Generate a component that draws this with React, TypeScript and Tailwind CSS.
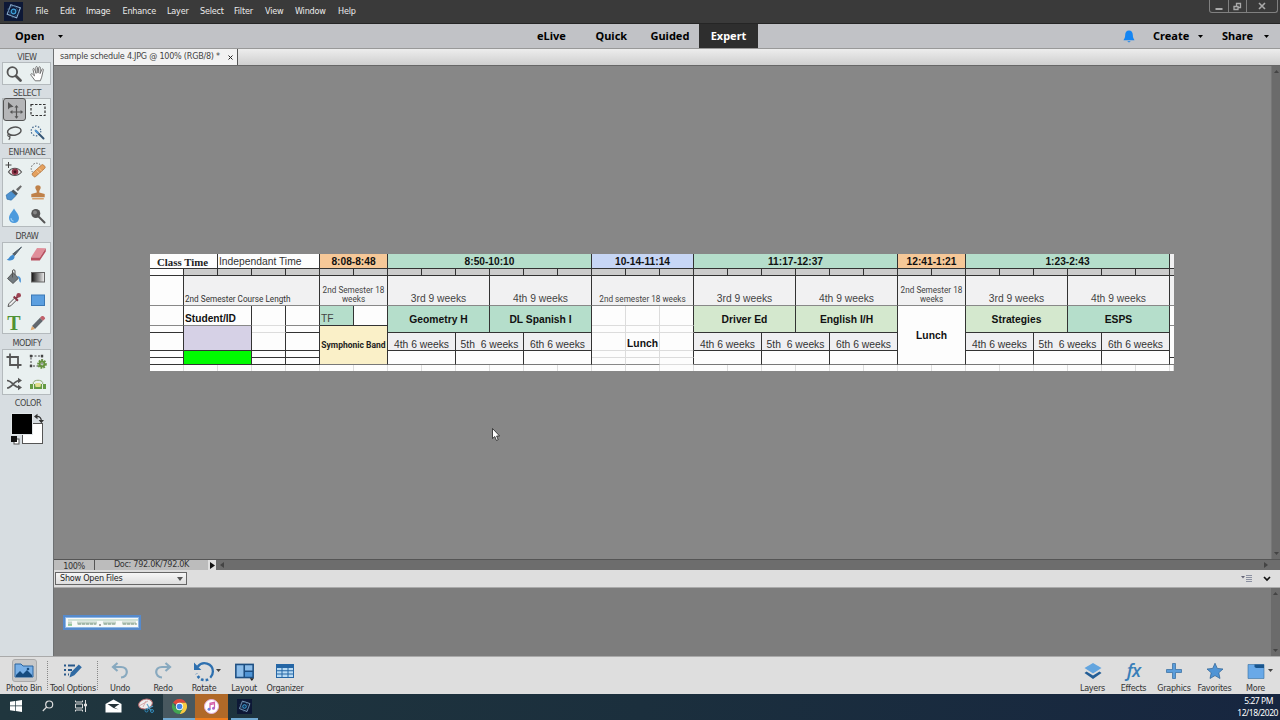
import type { ReactNode } from 'react';

const menuItems = [
  { label: 'File', width: 'w-[24.5px]' },
  { label: 'Edit', width: 'w-[26px]' },
  { label: 'Image', width: 'w-[36.5px]' },
  { label: 'Enhance', width: 'w-[44.5px]' },
  { label: 'Layer', width: 'w-[33px]' },
  { label: 'Select', width: 'w-[34px]' },
  { label: 'Filter', width: 'w-[31px]' },
  { label: 'View', width: 'w-[30px]' },
  { label: 'Window', width: 'w-[43px]' },
  { label: 'Help', width: 'w-[30px]' },
];

function Svg({ size = 18, children }: { size?: number; children: ReactNode }) {
  return (
    <svg width={size} height={size} viewBox="0 0 18 18" fill="none" className="shrink-0">
      {children}
    </svg>
  );
}

function Caret({ className = '' }: { className?: string }) {
  return (
    <svg width="5" height="3" viewBox="0 0 5 3" className={`shrink-0 ${className}`}>
      <path d="M0 0h5L2.5 3z" fill="currentColor" />
    </svg>
  );
}

function ElementsLogo({ size }: { size: number }) {
  return (
    <Svg size={size}>
      <rect width="18" height="18" fill="#0d1836" />
      <path d="m6.5 2.5 9 3-3.5 9.5-9-3.5z" stroke="#8fb2d2" strokeWidth="1" />
      <path d="M3.5 6.5 10 3l4.5 7.5L8 15z" stroke="#3d6286" strokeWidth=".6" />
      <circle cx="9" cy="9" r="2.2" fill="#12395d" stroke="#3fa0d8" strokeWidth="1.2" />
    </Svg>
  );
}

const toolGroups: { name: string; label: string; tools: { name: string; icon: ReactNode }[] }[] = [
  {
    name: 'VIEW',
    label: 'h-[13px]',
    tools: [
      {
        name: 'Zoom',
        icon: (
          <Svg>
            <circle cx="7.3" cy="7" r="4.8" stroke="#555" strokeWidth="1.8" />
            <path d="m11 11 4.5 4.5" stroke="#555" strokeWidth="2.8" strokeLinecap="round" />
          </Svg>
        ),
      },
      {
        name: 'Hand',
        icon: (
          <Svg>
            <path
              d="M6.2 15.8 2 10.2c-.8-1.2.6-2 1.5-1.1l2 1.8L4 4.6c-.3-1.3 1.1-1.6 1.5-.4l1.6 4.2-.3-5.9c0-1.3 1.5-1.3 1.6 0l.6 5.6.8-5.6c.2-1.2 1.6-1 1.5.2l-.2 5.9 1.8-4.2c.5-1.1 1.7-.6 1.4.5l-1.6 7.3-1.4 3.6z"
              fill="#fff"
              stroke="#666"
              strokeWidth=".9"
            />
          </Svg>
        ),
      },
    ],
  },
  {
    name: 'SELECT',
    label: 'h-[13px]',
    tools: [
      {
        name: 'Move',
        icon: (
          <Svg>
            <path d="M2 1v7.5l2-2 3.6-.8z" fill="#555" />
            <path d="M10.5 5.5v11M5 11h11" stroke="#555" strokeWidth="1.2" />
            <path d="m10.5 4 2 2.6h-4zM10.5 17.8l2-2.6h-4zM3.8 11l2.6-2v4zM17.2 11l-2.6-2v4z" fill="#555" />
          </Svg>
        ),
      },
      {
        name: 'Marquee',
        icon: (
          <Svg>
            <rect x="2" y="3.5" width="14" height="11" stroke="#333" strokeWidth="1.2" strokeDasharray="2.5 1.5" />
          </Svg>
        ),
      },
      {
        name: 'Lasso',
        icon: (
          <Svg>
            <ellipse cx="9.3" cy="7.2" rx="6.8" ry="4" transform="rotate(-10 9.3 7.2)" stroke="#555" strokeWidth="1.5" />
            <path d="M4.4 10c-1.6-.2-2.2 1.8-.8 2.3 1.5.4 2.5-1.5 1-2.2M4.5 12.4c.8 1 .5 2.2-.8 3.3" stroke="#555" strokeWidth="1.2" />
          </Svg>
        ),
      },
      {
        name: 'Quick Selection',
        icon: (
          <Svg>
            <circle cx="7" cy="7" r="4.8" stroke="#496c91" strokeWidth="1.2" strokeDasharray="1.5 1.5" />
            <path d="m7 7 7.5 7.5" stroke="#355575" strokeWidth="2" strokeLinecap="round" />
            <path d="m6.5 6.5 2.5 2.5" stroke="#5599d6" strokeWidth="1.8" strokeLinecap="round" />
          </Svg>
        ),
      },
    ],
  },
  {
    name: 'ENHANCE',
    label: 'h-[14px]',
    tools: [
      {
        name: 'Red Eye',
        icon: (
          <Svg>
            <path d="M3.5 1v6M.5 4h6" stroke="#444" />
            <path d="M3.5 11c3-5 9.5-5 13 0-3.5 4.5-10 4.5-13 0z" fill="#ece8e8" stroke="#555" strokeWidth="1.2" />
            <circle cx="10" cy="10.8" r="3.3" fill="#8d3448" />
            <circle cx="10" cy="10.8" r="1.4" fill="#40111c" />
          </Svg>
        ),
      },
      {
        name: 'Spot Healing',
        icon: (
          <Svg>
            <circle cx="7.5" cy="7.5" r="5.3" stroke="#666" strokeDasharray="1.5 1.5" />
            <rect x="2" y="7.5" width="15" height="4.6" rx="1.5" transform="rotate(-42 9.5 9.6)" fill="#e4a15f" stroke="#ab6d35" strokeWidth=".7" />
            <path d="m7.5 9.5 3 3.2M10 7.3l3 3.2" stroke="#f5d1a6" strokeWidth=".8" />
          </Svg>
        ),
      },
      {
        name: 'Smart Brush',
        icon: (
          <Svg>
            <path d="m11 5.2 4.5-4 1.4 1.4-4 4.6z" fill="#6b6b6b" />
            <path d="m8.3 5.4 4.6 4.2-2 2.2-4.8-4.2z" fill="#4d5962" />
            <path d="m6 7.5 4.8 4.2-4.5 4.5L2 15.2 1.2 11z" fill="#4c91cf" stroke="#2869a5" strokeWidth=".6" />
          </Svg>
        ),
      },
      {
        name: 'Clone Stamp',
        icon: (
          <Svg>
            <path d="M7.8 8.5C8 6 6.2 5.7 6.3 3.6c.1-3.2 5.3-3.2 5.4 0 .1 2.1-1.7 2.4-1.5 4.9l5.5 1.5v3.2H2.3V10z" fill="#bf8149" />
            <path d="M3.2 14h11.6v1.5H3.2z" fill="#d6a26e" />
          </Svg>
        ),
      },
      {
        name: 'Blur',
        icon: (
          <Svg>
            <path d="M9 1.5c2.5 4 5 6.4 5 9.6a5 5 0 0 1-10 0c0-3.2 2.5-5.6 5-9.6z" fill="#4b9add" />
            <path d="M6 11c0 2 1.3 3 2.6 3.3" stroke="#95ccf4" strokeWidth="1.1" />
          </Svg>
        ),
      },
      {
        name: 'Sponge',
        icon: (
          <Svg>
            <circle cx="6.8" cy="6.5" r="4.5" fill="#555" />
            <circle cx="6" cy="5.6" r="2" fill="#858585" />
            <path d="m10 10 5.5 5.5" stroke="#555" strokeWidth="2" strokeLinecap="round" />
          </Svg>
        ),
      },
    ],
  },
  {
    name: 'DRAW',
    label: 'h-[15px] pt-[3px]',
    tools: [
      {
        name: 'Brush',
        icon: (
          <Svg>
            <path d="m16.5 2-7 8.6-1.8-1.5z" fill="#53606b" stroke="#53606b" />
            <path d="M8.2 9.8c2.2 1.3 1.5 4.3-.9 5.2-2 .8-4.4.4-5.6-.6 2.7-.2 2.5-3.8 6.5-4.6z" fill="#3f8bd0" />
          </Svg>
        ),
      },
      {
        name: 'Eraser',
        icon: (
          <Svg>
            <path d="m8 3 8.8.2-6 9.2H2z" fill="#e08e9a" />
            <path d="m2 12.4 8.8.2v3H2zM10.8 12.4l6-9.2v3.2l-6 9.2z" fill="#b95060" />
          </Svg>
        ),
      },
      {
        name: 'Paint Bucket',
        icon: (
          <Svg>
            <path d="m8 4.5 5.5 5.7-5.5 5.3-5.5-5z" fill="#737b80" stroke="#444" strokeWidth=".8" />
            <path d="M7.5 9.5V3c0-1.7 2.5-1.7 2.5 0v4" stroke="#555" />
            <path d="M12 8c3.8.3 4.3 2.5 3.8 6.8-1.7-.8-1.8-3.2-2-4.5z" fill="#4f96d7" />
          </Svg>
        ),
      },
      {
        name: 'Gradient',
        icon: (
          <Svg>
            <defs>
              <linearGradient id="toolGradient">
                <stop stopColor="#111" />
                <stop offset="1" stopColor="#f2f2f2" />
              </linearGradient>
            </defs>
            <rect x="2.5" y="4.5" width="13" height="9.5" fill="url(#toolGradient)" stroke="#666" />
          </Svg>
        ),
      },
      {
        name: 'Eyedropper',
        icon: (
          <Svg>
            <path d="m3 15.5.8-2.7 6-6 2 2-6 6z" fill="#eee" stroke="#555" />
            <path d="m8.7 5.5 4.2 4.2M10.7 7.5l2.8-2.8" stroke="#873847" strokeWidth="2" />
            <circle cx="13.7" cy="4.3" r="2.3" fill="#9d4453" />
          </Svg>
        ),
      },
      {
        name: 'Shape',
        icon: (
          <Svg>
            <rect x="2.5" y="4" width="13" height="10.5" fill="#5b9fe0" stroke="#3b78b5" />
          </Svg>
        ),
      },
      { name: 'Type', icon: <span className="font-['Liberation_Serif',serif] text-[20px] leading-none font-bold text-[#509235]">T</span> },
      {
        name: 'Pencil',
        icon: (
          <Svg>
            <path d="m3 12 8-8.2 3 3L6 15z" fill="#62686e" />
            <path d="m3 12 3 3-4.3 1.3z" fill="#dfa468" />
            <path d="m11 3.8 1.8-1.7c1.3-1 4.2 1.7 3 3L14 6.8z" fill="#c1616b" />
          </Svg>
        ),
      },
    ],
  },
  {
    name: 'MODIFY',
    label: 'h-[15px] pt-[2px]',
    tools: [
      {
        name: 'Crop',
        icon: (
          <Svg>
            <path d="M5 1.5V13h11.5M1.5 5H13v11.5" stroke="#555" strokeWidth="1.8" />
          </Svg>
        ),
      },
      {
        name: 'Recompose',
        icon: (
          <Svg>
            <path d="M2 4h11v10H2z" stroke="#444" strokeDasharray="2 1.5" />
            <path d="M.8 2.8h2.4v2.4H.8zM11.8 2.8h2.4v2.4h-2.4zM.8 12.8h2.4v2.4H.8z" fill="#444" />
            <circle cx="13" cy="12" r="3.8" stroke="#65923f" strokeWidth="2" strokeDasharray="1.7 1.1" />
            <circle cx="13" cy="12" r="2.4" stroke="#65923f" strokeWidth="2" />
          </Svg>
        ),
      },
      {
        name: 'Content-Aware Move',
        icon: (
          <Svg>
            <path d="M2 5.5c5 0 7 7 12.5 7M2 13c5 0 7-7.5 12.5-7.5" stroke="#555" strokeWidth="1.7" />
            <path d="m13 2.8 4 2.7-4 2.7zM13 9.8l4 2.7-4 2.7z" fill="#555" />
          </Svg>
        ),
      },
      {
        name: 'Straighten',
        icon: (
          <Svg>
            <path d="M4.3 9V7.5c1-3 8.4-3 9.4 0V9" stroke="#91aa74" />
            <path d="M1 9h16v5H1z" fill="#659b43" />
            <rect x="6.2" y="8" width="5.6" height="4" rx="1.3" fill="#e2df8d" />
            <path d="M4.5 9v5M13.5 9v5" stroke="#e4ecdf" />
          </Svg>
        ),
      },
    ],
  },
];

function ToolPanel() {
  return (
    <aside className="flex w-[54px] shrink-0 flex-col border-r border-[#6d7072] bg-[#d7dde1] pl-[2px]">
      {toolGroups.map((group) => (
        <div key={group.name}>
          <div className={`flex w-[50px] items-center justify-center pt-[2px] text-[9px] leading-[10px] tracking-[-0.4px] text-[#444] ${group.label}`}>
            {group.name}
          </div>
          <div className="grid w-[49px] grid-cols-[24px_24px] bg-[#e9f0f0] shadow-[inset_0_0_0_1px_#b4babd]">
            {group.tools.map((tool) => (
              <div
                key={tool.name}
                className={`flex h-[23px] items-center justify-center ${
                  tool.name === 'Move' ? 'ml-px rounded-[3px] border border-[#555] bg-[#b5b6b8]' : ''
                }`}
              >
                {tool.icon}
              </div>
            ))}
          </div>
        </div>
      ))}
      <div className="flex h-[16px] w-[52px] items-center justify-center pt-[2px] text-[9px] tracking-[-0.3px] text-[#444]">COLOR</div>
      <svg width="36" height="34" viewBox="0 0 36 34" className="ml-[8px]">
        <rect x="12.5" y="12.5" width="20" height="20" fill="#fff" stroke="#555" />
        <rect x="1.5" y="2.5" width="21" height="21" fill="#000" stroke="#e1e6e9" />
        <path d="M26 5.5c4-.3 5.5 1.5 5.3 5" stroke="#333" strokeWidth="1.2" fill="none" />
        <path d="m24 5.5 3.5-2.7v5.4zM31.3 12.3 28.6 9H34z" fill="#333" />
        <rect x="4" y="28" width="5" height="5" fill="#fff" stroke="#555" />
        <path d="M1 25h6v6H1z" fill="#111" />
      </svg>
    </aside>
  );
}

type Cell = {
  col: number;
  row: number;
  cols?: number;
  rows?: number;
  text?: string;
  className?: string;
};

const time = 'items-center pt-[2px] font-bold text-[10.2px] text-[#111] border-[#333]';
const week = 'items-end text-[10.3px] text-[#444] bg-[#f1f1f2] border-[#333] border-b-[#888]';
const sixWeek = 'items-end !leading-[10px] text-[10.3px] text-[#333] bg-[#efeff1] border-[#333]';
const course = 'items-center pt-[2px] font-bold text-[10.3px] text-[#111] border-[#333]';
const semester = "items-end px-px pb-px text-center font-['Roboto',sans-serif] text-[8.2px] !leading-[9px] text-[#444] bg-[#f1f1f2] border-[#333] border-b-[#888]";
const plain = 'bg-[#fdfdfd] border-[#333]';
const faint = 'bg-[#fdfdfd] border-[#dcdcdc]';

// six week labels and the blank slots below them
function sixWeekCells(col: number): Cell[] {
  return ['4th 6 weeks', '5th  6 weeks', '6th 6 weeks'].flatMap((text, i) => [
    { col: col + i * 2, row: 6, cols: 2, text, className: sixWeek },
    { col: col + i * 2, row: 7, cols: 2, rows: 2, className: 'bg-[#fdfdfd] border-[#333] border-b-[#777]' },
  ]);
}

function nineWeekCells(col: number, hours: string, first: string, second: string, firstBg: string, secondBg: string): Cell[] {
  return [
    { col, row: 1, cols: 6, text: hours, className: `${time} bg-[#b5decb]` },
    { col, row: 3, cols: 3, text: '3rd 9 weeks', className: week },
    { col: col + 3, row: 3, cols: 3, text: '4th 9 weeks', className: week },
    { col, row: 4, cols: 3, rows: 2, text: first, className: `${course} ${firstBg}` },
    { col: col + 3, row: 4, cols: 3, rows: 2, text: second, className: `${course} ${secondBg}` },
    ...sixWeekCells(col),
  ];
}

const cells: Cell[] = [
  { col: 1, row: 1, cols: 2, text: 'Class Time', className: "items-center pt-px pr-[2px] font-['Liberation_Serif',serif] text-[10.8px] font-bold text-[#222] bg-[#fdfdfd] border-[#333]" },
  { col: 3, row: 1, cols: 3, text: 'Independant Time', className: 'items-center !justify-start pt-[2px] pl-px text-[10.3px] text-[#333] bg-[#fdfdfd] border-[#333]' },
  { col: 6, row: 1, cols: 2, text: '8:08-8:48', className: `${time} bg-[#f6c898]` },
  { col: 14, row: 1, cols: 3, text: '10-14-11:14', className: `${time} bg-[#c7d6f5]` },
  { col: 23, row: 1, cols: 2, text: '12:41-1:21', className: `${time} bg-[#f6c898]` },
  { col: 31, row: 1, className: 'bg-[#f1f1f2] border-[#333] border-r-0' },
  { col: 1, row: 2, className: plain },
  ...Array.from({ length: 30 }, (_, i) => ({ col: i + 2, row: 2, className: i === 29 ? 'bg-[#ccc] border-[#333] border-r-0' : 'bg-[#ccc] border-[#333]' })),

  { col: 1, row: 3, className: 'bg-[#fdfdfd] border-[#333] border-b-[#888]' },
  { col: 2, row: 3, cols: 4, text: '2nd Semester Course Length', className: "items-end !justify-start pl-px font-['Roboto',sans-serif] text-[8.2px] text-[#333] bg-[#f1f1f2] border-[#333] border-b-[#888]" },
  { col: 6, row: 3, cols: 2, text: '2nd Semester 18 weeks', className: semester },
  { col: 14, row: 3, cols: 3, text: '2nd semester 18 weeks', className: semester },
  { col: 23, row: 3, cols: 2, text: '2nd Semester 18 weeks', className: semester },
  { col: 31, row: 3, className: 'bg-[#f1f1f2] border-[#888] border-r-0' },

  { col: 1, row: 4, className: 'bg-[#fdfdfd] border-[#333] border-b-[#888]' },
  { col: 2, row: 4, cols: 2, text: 'Student/ID', className: 'items-end !justify-start pl-px font-bold text-[10.2px] text-[#111] bg-[#fdfdfd] border-[#333] border-b-[#888]' },
  { col: 4, row: 4, className: 'bg-[#fdfdfd] border-[#333] border-b-[#dcdcdc]' },
  { col: 5, row: 4, className: 'bg-[#fdfdfd] border-[#333] border-b-[#888]' },
  { col: 6, row: 4, text: 'TF', className: 'items-end !justify-start pl-px text-[10.3px] text-[#444] bg-[#b5decb] border-[#333]' },
  { col: 7, row: 4, className: plain },
  { col: 6, row: 5, cols: 2, rows: 4, text: 'Symphonic Band', className: "items-center font-['Roboto',sans-serif] text-[8.5px] font-bold text-[#222] bg-[#faf0c8] border-[#333] border-b-[#777]" },
  { col: 2, row: 5, cols: 2, rows: 2, className: 'bg-[#d6d1e6] border-[#333]' },
  { col: 2, row: 7, cols: 2, rows: 2, className: 'bg-[#00fb00] border-[#333]' },
  ...[5, 6, 7, 8].flatMap((row) => [
    { col: 1, row, className: plain },
    { col: 4, row, className: row < 6 ? 'bg-[#fdfdfd] border-[#333] border-b-[#dcdcdc]' : plain },
    { col: 5, row, className: plain },
  ]),

  ...[4, 5, 6, 7, 8].flatMap((row) => [14, 15, 16].map((col) => ({
    col,
    row,
    className: col === 16
      ? 'bg-[#fdfdfd] border-[#333] border-b-[#dcdcdc]'
      : row === 8
        ? 'bg-[#fdfdfd] border-[#dcdcdc] border-b-[#888]'
        : faint,
  }))),
  { col: 14, row: 6, cols: 3, text: 'Lunch', className: 'items-center pt-[5px] font-bold text-[10.3px] text-[#111] border-transparent border-r-[#333]' },
  { col: 23, row: 4, cols: 2, rows: 5, text: 'Lunch', className: 'items-center pt-[2px] font-bold text-[10.3px] text-[#111] bg-[#fdfdfd] border-[#333] border-b-[#777]' },
  { col: 31, row: 4, className: 'bg-[#fdfdfd] border-[#888] border-r-0' },
  { col: 31, row: 5, rows: 3, className: 'bg-[#fdfdfd] border-[#333] border-r-0' },
  { col: 31, row: 8, className: 'bg-[#fdfdfd] border-[#777] border-r-0' },

  ...nineWeekCells(8, '8:50-10:10', 'Geometry H', 'DL Spanish I', 'bg-[#b5decb]', 'bg-[#b5decb]'),
  ...nineWeekCells(17, '11:17-12:37', 'Driver Ed', 'English I/H', 'bg-[#d4e8ce]', 'bg-[#d4e8ce]'),
  ...nineWeekCells(25, '1:23-2:43', 'Strategies', 'ESPS', 'bg-[#d4e8ce]', 'bg-[#b5decb]'),
  ...Array.from({ length: 31 }, (_, i) => ({ col: i + 1, row: 9, className: 'bg-[#fdfdfd] border-[#ddd] border-b-0' })),
];

function Schedule() {
  return (
    <div className="grid h-[117px] w-[1024px] grid-cols-[repeat(30,34px)_4px] grid-rows-[15px_7px_30px_20px_7px_18px_7px_7px_6px] bg-[#fdfdfd] font-['Liberation_Sans',Arial,sans-serif]">
      {cells.map((cell, i) => (
        <div
          key={i}
          className={`flex min-w-0 justify-center border-r border-b leading-[12px] whitespace-pre-wrap ${cell.className}`}
          style={{
            gridColumn: `${cell.col} / span ${cell.cols ?? 1}`,
            gridRow: `${cell.row} / span ${cell.rows ?? 1}`,
          }}
        >
          {cell.text}
        </div>
      ))}
    </div>
  );
}

function TitleBar() {
  return (
    <header className="flex h-6 items-center border-b border-[#252525] bg-[#3a3a3a]">
      <div className="ml-1 w-[31.5px]">
        <ElementsLogo size={19} />
      </div>
      <nav className="flex pt-px text-[9px] tracking-[-0.2px] text-[#ececec]">
        {menuItems.map((item) => (
          <span key={item.label} className={`whitespace-nowrap ${item.width}`}>{item.label}</span>
        ))}
      </nav>
      <div className="mr-[2px] ml-auto flex h-[13px] self-start rounded-b-[3px] border border-t-0 border-[#808080] text-[#aaa]">
        <div className="flex w-[19px] items-center justify-center border-r border-[#808080]">
          <svg width="8" height="9"><path d="M.5 6h7v2h-7z" fill="currentColor" /></svg>
        </div>
        <div className="flex w-[18px] items-center justify-center border-r border-[#808080]">
          <svg width="9" height="9" fill="none" stroke="currentColor" strokeWidth="1.3"><path d="M3.5 4V1.5h4v4H5.5M1 4.5h4v3H1z" /></svg>
        </div>
        <div className="flex w-[30px] items-center justify-center">
          <svg width="8" height="8" stroke="currentColor" strokeWidth="1.6"><path d="m1 1 6 6M7 1 1 7" /></svg>
        </div>
      </div>
    </header>
  );
}

function ModeBar() {
  return (
    <div className="flex h-[25px] items-center border-b border-[#999] bg-[#c1c2c6] font-['Noto_Sans',sans-serif] text-[11px] font-bold text-black">
      <span className="ml-[15px] w-[43px]">Open</span>
      <Caret />
      <div className="ml-[459px] flex h-full items-center">
        <span className="ml-[15px] w-[58.5px]">eLive</span>
        <span className="w-[55px]">Quick</span>
        <span className="w-[48.5px]">Guided</span>
        <span className="flex h-full w-[59px] items-center justify-center bg-[#2e2e2e] text-white">Expert</span>
      </div>
      <svg width="12" height="13" viewBox="0 0 12 13" className="ml-[365px]">
        <path d="M6 .5c-2.5 0-3.8 2-3.8 4.5C2.2 8.2 1 9 .5 10.3h11C11 9 9.8 8.2 9.8 5 9.8 2.5 8.5.5 6 .5zM4.5 11.2h3c-.3 1.5-2.7 1.5-3 0z" fill="#1585f2" />
      </svg>
      <span className="ml-[18px] w-[45px]">Create</span>
      <Caret />
      <span className="ml-[19px] w-[42px]">Share</span>
      <Caret />
    </div>
  );
}

function PhotoBin() {
  return (
    <>
      <div className="flex h-[11px] items-stretch border-t border-[#555] bg-[#6d6d6d] text-[9px] text-[#333]">
        <span className="flex w-[40px] items-center justify-center bg-[#bcbcbc] pt-[3px] tracking-[-0.4px]">100%</span>
        <span className="flex w-[114px] items-center justify-center border-l border-[#555] bg-[#bcbcbc] tracking-[-0.3px]">Doc: 792.0K/792.0K</span>
        <span className="flex w-2 items-center justify-center bg-[#e0e0e0]">
          <svg width="5" height="7"><path d="M0 0v7l5-3.5z" fill="#111" /></svg>
        </span>
        <svg width="4" height="6" className="ml-1 self-center"><path d="M4 0v6L0 3z" fill="#444" /></svg>
        <svg width="4" height="6" className="mr-3 ml-auto self-center"><path d="M0 0v6l4-3z" fill="#444" /></svg>
      </div>
      <div className="flex h-[18px] items-center border-b border-[#aaa] bg-[#dedede]">
        <div className="ml-px flex h-[13px] w-[132px] items-center justify-between border border-[#666] bg-linear-to-b from-[#f6f6f6] to-[#dedede] pt-px pr-[3px] pl-[4px] text-[9px] tracking-[-0.25px] text-[#222]">
          Show Open Files
          <svg width="6" height="4"><path d="M0 0h6L3 4z" fill="#555" /></svg>
        </div>
        <svg width="12" height="10" className="mr-[10px] ml-auto">
          <path d="M0 2h4L2 4.5z" fill="#667" />
          <path d="M5 1.5h6M5 3.5h6M5 5.5h6M5 7.5h6" stroke="#8b90a1" />
        </svg>
        <svg width="8" height="6" className="mr-[9px]"><path d="m1 1 3 3 3-3" fill="none" stroke="#111" strokeWidth="1.7" /></svg>
      </div>
      <div className="flex h-[68px] justify-between bg-[#7d7d7d]">
        <div className="mt-[27px] ml-[9px] flex h-[15px] w-[78px] items-center border-2 border-[#568acb] bg-[#8db7e6] px-px">
          <svg width="72" height="9" viewBox="0 0 72 9">
            <path d="M0 0h72v9H0z" fill="#f8faf8" />
            <path d="M2 2h70" stroke="#a9c9b5" />
            <path d="M2 5h4M11 5h20M37 5h13M56 5h14" stroke="#c3d3c7" strokeWidth="3" />
            <path d="M12 6h18M38 6h12M57 6h14" stroke="#7d9684" strokeDasharray="3 1" />
            <path d="M2 7h4" stroke="#49a451" />
            <path d="M33 7h2" stroke="#555" />
          </svg>
        </div>
        <div className="flex w-[9px] flex-col items-center justify-between bg-[#6b6b6b] py-[4px] text-[#444]">
          <Caret className="rotate-180" />
          <Caret />
        </div>
      </div>
    </>
  );
}

const panelButtons: { label: string; width: string; icon: ReactNode; caret?: boolean }[] = [
  {
    label: 'Photo Bin',
    width: 'w-[48px]',
    icon: (
      <svg width="20" height="18" viewBox="0 0 20 18">
        <path d="M1 2h6l2 2h10v11H1z" fill="#79b0e7" stroke="#2b649f" />
        <path d="m2 13 4-4 3 3 4-4 5 5v2H2z" fill="#174c80" />
        <circle cx="14" cy="7" r="1.3" fill="#174c80" />
      </svg>
    ),
  },
  {
    label: 'Tool Options',
    width: 'w-[50px]',
    icon: (
      <svg width="20" height="18" viewBox="0 0 20 18" fill="none">
        <path d="M1 3.5h2M1 8h2M1 12.5h2M5 3.5h7M5 8h4M5 12.5h1" stroke="#28588a" strokeWidth="1.8" />
        <path d="m6.5 15.5 1.3-5L15.8 2.5l3 2.8-7.5 8z" fill="#306aa3" />
      </svg>
    ),
  },
  {
    label: 'Undo',
    width: 'w-[44px]',
    icon: (
      <Svg>
        <path d="M3 5h7c8 0 7.5 10 0 10.5" stroke="#88a9bf" strokeWidth="2.2" />
        <path d="M6.5 1 2 5l4.5 4" stroke="#88a9bf" strokeWidth="2.2" />
      </Svg>
    ),
  },
  {
    label: 'Redo',
    width: 'w-[42px]',
    icon: (
      <Svg>
        <path d="M15 5H8C0 5 .5 15 8 15.5" stroke="#88a9bf" strokeWidth="2.2" />
        <path d="M11.5 1 16 5l-4.5 4" stroke="#88a9bf" strokeWidth="2.2" />
      </Svg>
    ),
  },
  {
    label: 'Rotate',
    width: 'w-[40px]',
    caret: true,
    icon: (
      <svg width="21" height="21" viewBox="0 0 20 20" fill="none">
        <path d="M3.5 5.5C8-.5 18 2 18 10c0 2.5-1 4.5-2.5 6" stroke="#2e70af" strokeWidth="2.2" />
        <path d="M13.5 17.5c-4 2-9 0-11-5.5" stroke="#2e70af" strokeWidth="2.5" strokeDasharray="2.5 2" />
        <path d="M0 1.5v7h7z" fill="#2e70af" />
      </svg>
    ),
  },
  {
    label: 'Layout',
    width: 'w-[40px]',
    icon: (
      <svg width="21" height="19" viewBox="0 0 20 18">
        <path d="M1 1.5h18v14H1z" fill="#1c4e82" />
        <path d="M2.5 3H9v11H2.5zM10.5 3h7v5h-7z" fill="#8bbce9" />
        <path d="M10.5 9.5h7V14h-7z" fill="#4f94d5" />
        <path d="M15 15.5h4L17 18z" fill="#222" />
      </svg>
    ),
  },
  {
    label: 'Organizer',
    width: 'w-[42px]',
    icon: (
      <svg width="20" height="18" viewBox="0 0 20 18">
        <path d="M1 2h18v14H1z" fill="#2566a5" />
        <path d="M2 6h4.5v2.3H2zM7.5 6h5v2.3h-5zM13.5 6H18v2.3h-4.5zM2 9.3h4.5v2.3H2zM7.5 9.3h5v2.3h-5zM13.5 9.3H18v2.3h-4.5zM2 12.6h4.5v2.3H2zM7.5 12.6h5v2.3h-5zM13.5 12.6H18v2.3h-4.5z" fill="#b8daf3" />
      </svg>
    ),
  },
];

const rightButtons: typeof panelButtons = [
  {
    label: 'Layers',
    width: 'w-[41px]',
    icon: (
      <Svg>
        <path d="m.5 11 2-1.5L9 13.5l6.5-4 2 1.5L9 17z" fill="#235d95" />
        <path d="m9 1 8.5 5L9 11.500.5 6z" fill="#63a5df" />
      </Svg>
    ),
  },
  {
    label: 'Effects',
    width: 'w-[41px]',
    icon: <span className="-mt-[3px] font-['Open_Sans','Noto_Sans',sans-serif] text-[18px] leading-[18px] font-semibold tracking-[-1px] text-[#397eb9] italic">fx</span>,
  },
  { label: 'Graphics', width: 'w-[40px]', icon: <Svg><path d="M7.5 1.5h3v6h6v3h-6v6h-3v-6h-6v-3h6z" fill="#5b9ddb" stroke="#306a9e" strokeWidth=".7" /></Svg> },
  { label: 'Favorites', width: 'w-[41px]', icon: <Svg><path d="m9 1.2 2.3 5.2 5.7.6-4.2 3.8 1.2 5.7L9 13.6l-5 2.9 1.2-5.7L1 7l5.7-.6z" fill="#4f94d5" stroke="#295f92" strokeWidth=".7" /></Svg> },
  {
    label: 'More',
    width: 'w-[41px]',
    caret: true,
    icon: <Svg><path d="M1 2.5h16v14H1z" fill="#69a9e8" stroke="#386f9e" strokeWidth=".6" /><path d="M7.5 2.5H17V6H9L7.5 5z" fill="#19558d" /></Svg>,
  },
];

function PanelButton({ label, width, icon, caret }: (typeof panelButtons)[number]) {
  return (
    <div className={`relative flex flex-col items-center pt-[2px] ${width}`}>
      <div className={`flex h-[24px] w-[25px] items-center justify-center ${label === 'Photo Bin' ? 'rounded-[3px] border border-[#aaa] bg-[#c8c8c8]' : 'pt-px'}`}>
        {icon}
      </div>
      <span className="text-[9px] leading-[12px] tracking-[-0.3px] whitespace-nowrap text-[#333]">{label}</span>
      {caret && <Caret className="absolute top-[12px] right-[3px] text-[#444]" />}
    </div>
  );
}

function BottomBar() {
  return (
    <div className="flex h-[38px] border-t border-[#aaa] bg-[#dedede]">
      {panelButtons.map((button) => (
        <div key={button.label} className="flex">
          <PanelButton {...button} />
          {(button.label === 'Photo Bin' || button.label === 'Tool Options') && (
            <i className="mt-1 -ml-px h-[29px] border-l border-dotted border-[#888]" />
          )}
        </div>
      ))}
      <div className="mr-1 ml-auto flex">
        {rightButtons.map((button) => <PanelButton key={button.label} {...button} />)}
      </div>
    </div>
  );
}

const taskbarItems: { name: string; className: string; icon: ReactNode }[] = [
  { name: 'Start', className: 'w-[32px] border-transparent', icon: <svg width="12" height="12" fill="#fff"><path d="m0 1.7 5-.7v4.6H0zM5.7.9 12 0v5.6H5.7zM0 6.3h5V11l-5-.7zM5.7 6.3H12V12l-6.3-.9z" /></svg> },
  { name: 'Search', className: 'w-[32px] border-transparent', icon: <svg width="12" height="12" fill="none" stroke="#ddd" strokeWidth="1.2"><circle cx="7.2" cy="4.5" r="3.5" /><path d="M4.7 7 .8 11" /></svg> },
  { name: 'Task View', className: 'w-[33px] border-transparent', icon: <svg width="12" height="12" fill="none" stroke="#ddd"><path d="M.5.5V2h7V.5M.5 4h7v4h-7zM.5 11.5V10h7v1.5M10.5 0v12" /><path d="M9.5 4h2v2h-2z" fill="#ddd" /></svg> },
  { name: 'Mail', className: 'w-[33px] border-transparent', icon: <svg width="17" height="14"><path d="M.5 5 8.500.5l8 4.5v8.5H.5z" fill="#fff" /><path d="M2.5 5h12l-5 3.5 4 2-5-1.5z" fill="#263339" /></svg> },
  { name: 'Snip', className: 'w-[33px] border-transparent', icon: <svg width="17" height="16"><ellipse cx="7.5" cy="6" rx="7" ry="4.8" transform="rotate(-15 7.5 6)" fill="#eee" stroke="#b66a6d" /><path d="m1 8 9-5M5 9l3-6" stroke="#d6a8a9" /><path d="m9 6 4 7M15 8l-6 3" stroke="#5ca4cb" strokeWidth="1.2" /><circle cx="14" cy="13" r="1.5" fill="none" stroke="#328cbd" /><circle cx="8.5" cy="12.5" r="1.5" fill="none" stroke="#328cbd" /></svg> },
  {
    name: 'Chrome',
    className: 'w-[32px] bg-[#48585f] border-[#70a9d1]',
    icon: (
      <svg width="15" height="15" viewBox="0 0 16 16">
        <path d="M8 8 1.070 4A8 8 0 0 1 14.930 4H8z" fill="#df493b" />
        <path d="M14.930 4A8 8 0 0 1 8 16L11.5 10 8 4z" fill="#f8cb40" />
        <path d="M1.070 4A8 8 0 0 0 8 16l3.5-6H4.5z" fill="#42a552" />
        <circle cx="8" cy="8" r="3.9" fill="#fff" />
        <circle cx="8" cy="8" r="3" fill="#4285e8" />
      </svg>
    ),
  },
  {
    name: 'iTunes',
    className: 'w-[33px] bg-[#b06928] border-[#ed7b1c]',
    icon: <svg width="15" height="15"><circle cx="7.5" cy="7.5" r="7" fill="#fff" stroke="#e6b4e2" /><path d="M6 10V4.2l4.5-1V9M6 5.6l4.5-1" fill="none" stroke="#d45ca9" strokeWidth="1.2" /><circle cx="5" cy="10.2" r="1.5" fill="#6d80df" /><circle cx="9.5" cy="9.2" r="1.5" fill="#b165c8" /></svg>,
  },
  { name: 'Photoshop Elements', className: 'w-[27px] ml-[3px] border-[#70a9d1]', icon: <ElementsLogo size={15} /> },
];

function Taskbar() {
  return (
    <footer className="flex h-[26px] bg-linear-to-r from-[#20363e] via-[#1b2f3d] to-[#172640]">
      {taskbarItems.map((item) => (
        <div key={item.name} className={`flex items-center justify-center border-b-2 ${item.className}`}>
          {item.icon}
        </div>
      ))}
      <div className="mr-[2px] ml-auto flex flex-col items-end pt-px font-['Noto_Sans',sans-serif] text-[8.5px] leading-[12px] tracking-[-0.45px] text-white">
        <span className="pr-[5px]">5:27 PM</span>
        <span>12/18/2020</span>
      </div>
    </footer>
  );
}

export default function App() {
  return (
    <div className="flex h-[720px] w-[1280px] flex-col overflow-hidden bg-[#878787] font-['DejaVu_Sans_Condensed','DejaVu_Sans',sans-serif]">
      <TitleBar />
      <ModeBar />
      <div className="flex h-[607px]">
        <ToolPanel />
        <main className="flex min-w-0 flex-1 flex-col">
          <div className="flex h-[17px] border-b border-[#666] bg-linear-to-b from-[#ededed] to-[#cfcfcf]">
            <div className="flex w-[184px] items-center border-r border-[#555] bg-[#f2f2f2] pl-[6px] text-[9px] tracking-[-0.25px] text-[#444]">
              <span className="w-[168px] whitespace-nowrap">sample schedule 4.JPG @ 100% (RGB/8) *</span>
              <svg width="5" height="5" stroke="#222" strokeWidth="1"><path d="m.5.5 4 4M4.500.5l-4 4" /></svg>
            </div>
          </div>
          <div className="flex h-[493px] justify-between">
            <div className="pt-[188px] pl-[96px]">
              <Schedule />
              <svg width="8" height="13" viewBox="0 0 8 13" className="mt-[57px] ml-[342px]">
                <path d="M.5.5v10l2.3-2 1.7 4 1.7-.8-1.6-3.7h3z" fill="#fff" stroke="#222" strokeWidth=".8" />
              </svg>
            </div>
            <div className="flex w-[9px] flex-col items-center justify-between border-l border-[#777] bg-[#6b6b6b] py-[4px] text-[#444]">
              <Caret className="rotate-180" />
              <Caret />
            </div>
          </div>
          <PhotoBin />
        </main>
      </div>
      <BottomBar />
      <Taskbar />
    </div>
  );
}
